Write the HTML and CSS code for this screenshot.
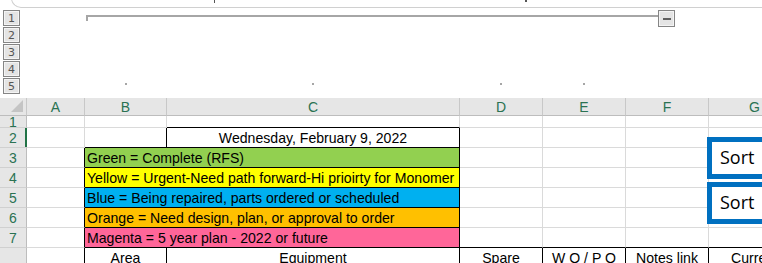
FILE: index.html
```html
<!DOCTYPE html>
<html>
<head>
<meta charset="utf-8">
<link rel="stylesheet" href="styles.css">
</head>
<body>
<div class="top">
  <div class="fbar"></div>
  <span class="mark m1"></span>
  <span class="mark m2"></span>
  <div class="levels">
    <div class="lvl">1</div>
    <div class="lvl">2</div>
    <div class="lvl">3</div>
    <div class="lvl">4</div>
    <div class="lvl">5</div>
  </div>
  <div class="bracket"></div>
  <div class="minus"><span></span></div>
  <span class="dot d1"></span>
  <span class="dot d2"></span>
  <span class="dot d3"></span>
  <span class="dot d4"></span>
</div>
<div class="sheet">
  <div class="corner"></div>
  <div class="ch">A</div>
  <div class="ch">B</div>
  <div class="ch">C</div>
  <div class="ch">D</div>
  <div class="ch">E</div>
  <div class="ch">F</div>
  <div class="ch">G</div>

  <div class="rh">1</div>
  <div class="c"></div><div class="c"></div><div class="c bb"></div><div class="c"></div><div class="c"></div><div class="c"></div><div class="c"></div>

  <div class="rh act">2</div>
  <div class="c"></div><div class="c br bb"></div><div class="c date br bb">Wednesday, February 9, 2022</div><div class="c"></div><div class="c"></div><div class="c"></div><div class="c"></div>

  <div class="rh">3</div>
  <div class="c br"></div><div class="c leg green">Green = Complete (RFS)</div><div class="c"></div><div class="c"></div><div class="c"></div><div class="c"></div>

  <div class="rh">4</div>
  <div class="c br"></div><div class="c leg yellow">Yellow = Urgent-Need path forward-Hi prioirty for Monomer</div><div class="c"></div><div class="c"></div><div class="c"></div><div class="c"></div>

  <div class="rh">5</div>
  <div class="c br"></div><div class="c leg blue">Blue = Being repaired, parts ordered or scheduled</div><div class="c"></div><div class="c"></div><div class="c"></div><div class="c"></div>

  <div class="rh">6</div>
  <div class="c br"></div><div class="c leg orange">Orange = Need design, plan, or approval to order</div><div class="c"></div><div class="c"></div><div class="c"></div><div class="c"></div>

  <div class="rh">7</div>
  <div class="c br"></div><div class="c leg magenta">Magenta = 5 year plan - 2022 or future</div><div class="c bb"></div><div class="c bb"></div><div class="c bb"></div><div class="c bb"></div>

  <div class="rh"></div>
  <div class="c br"></div><div class="c hd">Area</div><div class="c hd">Equipment</div><div class="c hd">Spare</div><div class="c hd">W O / P O</div><div class="c hd">Notes link</div><div class="c hd">Current</div>

  <div class="sort s1">Sort</div>
  <div class="sort s2">Sort</div>
</div>
</body>
</html>
```

FILE: styles.css
```css
* { box-sizing: border-box; }
html, body { margin: 0; padding: 0; background: #fff; overflow: hidden; }
body { width: 762px; height: 263px; font-family: "Liberation Sans", Arial, sans-serif; }

.top { position: relative; height: 98px; }
.fbar {
  position: absolute; left: 11px; top: -10px; right: -10px; height: 18px;
  border-left: 1px solid #d0d0d0; border-bottom: 1px solid #d0d0d0;
  border-bottom-left-radius: 10px;
}
.mark { position: absolute; width: 1px; height: 3px; background: #555; top: 0; }
.m1 { left: 214px; }
.m2 { left: 525px; height: 2px; width: 2px; }

.levels { position: absolute; left: 3px; top: 10px; display: flex; flex-direction: column; gap: 1px; }
.lvl, .minus {
  width: 17px; height: 16px; border: 1px solid #858585;
  box-shadow: inset 0 0 0 1px #f4f4f4; background: #e4e4e4;
  font-family: "DejaVu Sans", sans-serif; font-size: 11px; color: #555;
  display: flex; align-items: center; justify-content: center; line-height: 1;
}
.bracket {
  position: absolute; left: 86px; top: 15px; width: 572px; height: 6px;
  border-top: 2px solid #a6a6a6; border-left: 2px solid #a6a6a6;
}
.minus { position: absolute; left: 658px; top: 10px; height: 17px; }
.minus span { width: 8px; height: 2px; background: #5f5f5f; display: block; }
.dot { position: absolute; top: 83px; width: 2px; height: 2px; background: #a6a6a6; }
.d1 { left: 125px; } .d2 { left: 312px; } .d3 { left: 500px; } .d4 { left: 583px; }

.sheet {
  position: relative;
  display: grid;
  grid-template-columns: 27px 58px 82px 293px 83px 83px 83px 92px;
  grid-template-rows: 18px 12px 20px 20px 20px 20px 20px 20px 30px;
  font-size: 14.1px;
}
.corner { background: #e6e6e6; border-right: 1px solid #c8c8c8; border-bottom: 1px solid #bdbdbd; position: relative; }
.corner::after {
  content: ""; position: absolute; right: 3px; bottom: 3px;
  border-left: 12px solid transparent; border-bottom: 12px solid #c4c4c4;
}
.ch {
  background: #e6e6e6; border-right: 1px solid #c8c8c8; border-bottom: 1px solid #bdbdbd;
  font-family: "Liberation Sans", sans-serif; font-size: 14px; color: #2a7252;
  display: flex; align-items: center; justify-content: center; line-height: 1;
}
.rh {
  background: #e6e6e6; border-right: 1px solid #bdbdbd; border-bottom: 1px solid #d0d0d0;
  font-family: "Liberation Sans", sans-serif; font-size: 14px; color: #2a7252;
  display: flex; align-items: center; justify-content: center; line-height: 1;
  position: relative;
}
.rh.act::after { content: ""; position: absolute; right: -1px; top: 0; bottom: 0; width: 2px; background: #217346; }
.c { border-right: 1px solid #dadada; border-bottom: 1px solid #dadada; white-space: nowrap; overflow: hidden; color: #000; }
.br { border-right-color: #000; }
.bb { border-bottom-color: #000; }
.date { text-align: center; line-height: 19px; padding-top: 1px; }
.leg { grid-column: span 2; border-right-color: #000; border-bottom-color: #000; padding: 1px 0 0 2px; line-height: 19px; }
.green { background: #92d050; }
.yellow { background: #ffff00; }
.blue { background: #00b0f0; }
.orange { background: #ffc000; }
.magenta { background: #ff6699; }
.hd { border-right-color: #000; text-align: center; padding-top: 2px; line-height: 17px; }

.sort {
  position: absolute; left: 707px; width: 70px; height: 42px;
  border: 5px solid #0070c0; background: #fff;
  font-family: "Open Sans", sans-serif; font-size: 18px; color: #000;
  padding-left: 8px; line-height: 30px;
}
.s1 { top: 39px; }
.s2 { top: 84px; }
```
